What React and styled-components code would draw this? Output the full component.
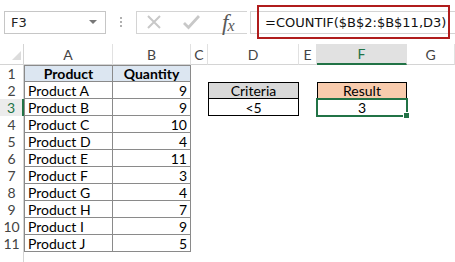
import React from 'react';
import styled, { createGlobalStyle, css } from 'styled-components';

const GlobalStyle = createGlobalStyle`
  html, body { margin: 0; padding: 0; background: #fff; }
  body { font-family: Lato, "Liberation Sans", sans-serif; }
`;

const green = '#217346';

const Window = styled.div`
  width: 455px;
  height: 262px;
  overflow: hidden;
  background: #fff;
  display: flex;
  flex-direction: column;
`;

const FormulaBar = styled.div`
  height: 44px;
  display: flex;
  align-items: center;
  padding-left: 4px;
  box-sizing: border-box;
`;

const NameBox = styled.div`
  width: 102px;
  height: 23px;
  box-sizing: border-box;
  border: 1px solid #c6c6c6;
  display: flex;
  align-items: center;
  justify-content: space-between;
  padding: 0 8px 0 6px;
  font-family: "DejaVu Sans", sans-serif;
  font-size: 13px;
  color: #222;
`;

const Caret = styled.span`
  width: 0;
  height: 0;
  border-left: 4px solid transparent;
  border-right: 4px solid transparent;
  border-top: 4px solid #777;
`;

const Dots = styled.div`
  width: 30px;
  display: flex;
  flex-direction: column;
  align-items: center;
  gap: 2px;
  & > span {
    width: 2px;
    height: 2px;
    background: #b0b0b0;
  }
`;

const FxButtons = styled.div`
  width: 111px;
  height: 23px;
  box-sizing: border-box;
  border: 1px solid #d4d4d4;
  border-right: none;
  display: flex;
  align-items: center;
  padding-left: 9px;
  gap: 20px;
`;

const Fx = styled.span`
  font-family: "Liberation Serif", serif;
  font-style: italic;
  font-size: 23px;
  color: #5a5a5a;
  margin-left: 2px;
  letter-spacing: -1px;
  line-height: 1;
  & > sub {
    font-size: 16px;
    vertical-align: -1px;
  }
`;

const FormulaWrap = styled.div`
  flex: 1;
  height: 23px;
  margin-left: 3px;
  position: relative;
  box-sizing: border-box;
  border: 1px solid #d4d4d4;
  border-right: none;
  display: flex;
  align-items: center;
  padding-left: 14px;
  font-family: "DejaVu Sans", sans-serif;
  font-size: 13px;
  color: #111;
`;

const Highlight = styled.div`
  position: absolute;
  left: 6px;
  right: 5px;
  top: -7px;
  bottom: -6px;
  border: 2px solid #b01c1c;
`;

const Sheet = styled.div`
  display: grid;
  grid-template-columns: 24px 89px 78px 17px 91px 18px 90px 1fr;
  grid-template-rows: 21px repeat(11, 17px) 1fr;
  flex: 1;
`;

const Corner = styled.div`
  border-right: 1px solid #d4d4d4;
  border-bottom: 1px solid #d4d4d4;
  display: flex;
  align-items: flex-end;
  justify-content: flex-end;
  padding: 0 2px 4px 0;
  & > span {
    width: 0;
    height: 0;
    border-left: 9px solid transparent;
    border-bottom: 9px solid #dcdcdc;
  }
`;

const ColHead = styled.div`
  box-sizing: border-box;
  display: flex;
  align-items: center;
  justify-content: center;
  font-size: 14px;
  color: #444;
  border-right: 1px solid #e1e1e1;
  border-bottom: 1px solid #d4d4d4;
  ${(p) =>
    p.$active &&
    css`
      background: #e1e1e1;
      color: ${green};
      border-bottom: 2px solid ${green};
    `}
`;

const RowHead = styled.div`
  box-sizing: border-box;
  display: flex;
  align-items: center;
  justify-content: center;
  font-size: 14px;
  color: #444;
  border-right: 1px solid #d4d4d4;
  ${(p) =>
    p.$active &&
    css`
      background: #ececec;
      color: ${green};
      border-right: 2px solid ${green};
    `}
`;

const Cell = styled.div`
  box-sizing: border-box;
  position: relative;
  display: flex;
  align-items: center;
  padding: 0 3px;
  font-size: 14px;
  color: #000;
  white-space: nowrap;
  justify-content: ${(p) => (p.$align === 'right' ? 'flex-end' : p.$align === 'center' ? 'center' : 'flex-start')};
  font-weight: ${(p) => (p.$bold ? 700 : 400)};
  background: ${(p) => p.$bg || 'transparent'};
  border-top: ${(p) => (p.$t ? `1px solid ${p.$line}` : 'none')};
  border-left: ${(p) => (p.$l ? `1px solid ${p.$line}` : 'none')};
  border-right: ${(p) => (p.$r ? `1px solid ${p.$line}` : 'none')};
  border-bottom: ${(p) => (p.$b ? `1px solid ${p.$line}` : 'none')};
  ${(p) =>
    p.$selected &&
    css`
      &::after {
        content: '';
        position: absolute;
        left: -2px;
        top: -1px;
        right: -2px;
        bottom: -2px;
        border: 2px solid ${green};
      }
      &::before {
        content: '';
        position: absolute;
        right: -4px;
        bottom: -4px;
        width: 5px;
        height: 5px;
        background: ${green};
        border: 1px solid #fff;
        z-index: 1;
      }
    `}
`;

const cols = ['A', 'B', 'C', 'D', 'E', 'F', 'G'];
const products = ['A', 'B', 'C', 'D', 'E', 'F', 'G', 'H', 'I', 'J'];
const quantities = [9, 9, 10, 4, 11, 3, 4, 7, 9, 5];

const cells = {
  A1: { text: 'Product', align: 'center', bold: true, bg: '#dce6f1', kind: 'table' },
  B1: { text: 'Quantity', align: 'center', bold: true, bg: '#dce6f1', kind: 'table' },
  D2: { text: 'Criteria', align: 'center', bg: '#d9d9d9', kind: 'box' },
  D3: { text: '<5', align: 'center', kind: 'box' },
  F2: { text: 'Result', align: 'center', bg: '#f8cbad', kind: 'box' },
  F3: { text: '3', align: 'center', kind: 'box', selected: true },
};
products.forEach((p, i) => {
  cells[`A${i + 2}`] = { text: `Product ${p}`, kind: 'table' };
  cells[`B${i + 2}`] = { text: quantities[i], align: 'right', kind: 'table' };
});

const borderProps = (col, row, c) => {
  if (!c) return {};
  if (c.kind === 'table') {
    return { $line: '#8a8a8a', $t: row === 1, $l: col === 'A', $r: true, $b: true };
  }
  return { $line: '#000', $t: row === 2, $l: true, $r: true, $b: true };
};

const App = () => {
  const rows = Array.from({ length: 11 }, (_, i) => i + 1);
  return (
    <>
      <GlobalStyle />
      <Window>
        <FormulaBar>
          <NameBox>
            <span>F3</span>
            <Caret />
          </NameBox>
          <Dots>
            <span />
            <span />
            <span />
          </Dots>
          <FxButtons>
            <svg width="16" height="16" viewBox="0 0 16 16">
              <path d="M2 2 L14 14 M14 2 L2 14" stroke="#c8c8c8" strokeWidth="2" fill="none" />
            </svg>
            <svg width="18" height="16" viewBox="0 0 18 16">
              <path d="M2 9 L6.5 13.5 L17 2" stroke="#c8c8c8" strokeWidth="2.8" fill="none" />
            </svg>
            <Fx>
              f<sub>x</sub>
            </Fx>
          </FxButtons>
          <FormulaWrap>
            =COUNTIF($B$2:$B$11,D3)
            <Highlight />
          </FormulaWrap>
        </FormulaBar>
        <Sheet>
          <Corner>
            <span />
          </Corner>
          {cols.map((c) => (
            <ColHead key={c} $active={c === 'F'}>
              {c}
            </ColHead>
          ))}
          {rows.map((r) => (
            <React.Fragment key={r}>
              <RowHead $active={r === 3}>{r}</RowHead>
              {cols.map((c) => {
                const cell = cells[`${c}${r}`];
                return (
                  <Cell
                    key={c}
                    $align={cell?.align}
                    $bold={cell?.bold}
                    $bg={cell?.bg}
                    $selected={cell?.selected}
                    {...borderProps(c, r, cell)}
                  >
                    {cell?.text}
                  </Cell>
                );
              })}
            </React.Fragment>
          ))}
          <RowHead />
        </Sheet>
      </Window>
    </>
  );
};

export default App;
